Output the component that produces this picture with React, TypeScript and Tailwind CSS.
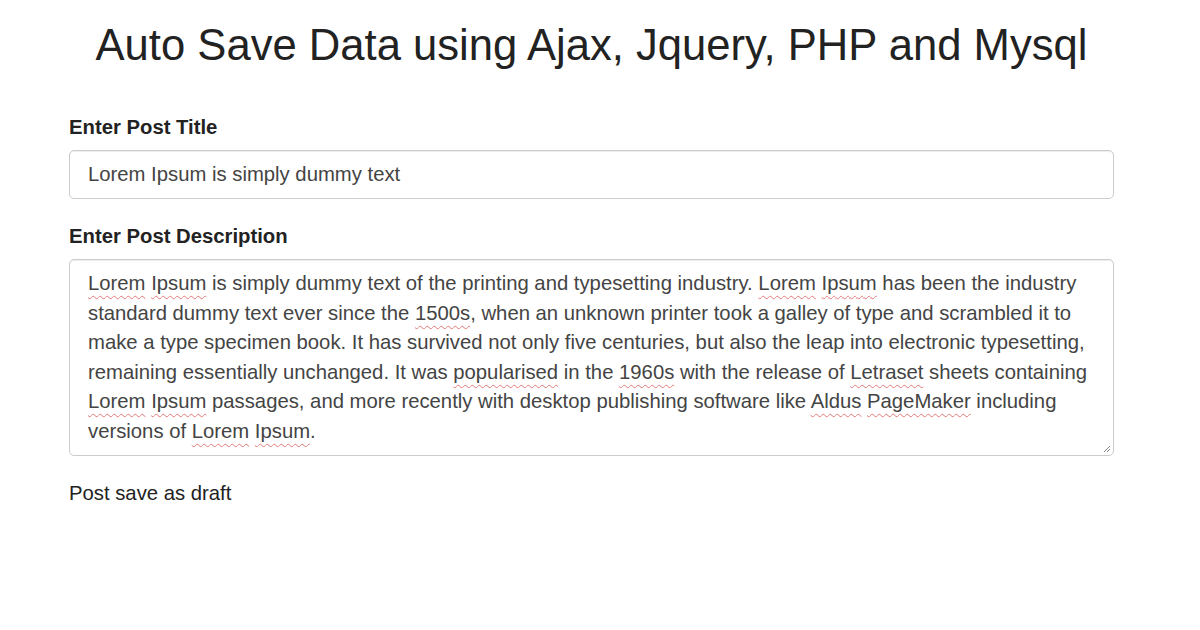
import React from 'react'

const Spell = ({ children }: { children: React.ReactNode }) => (
  <span className="underline decoration-wavy decoration-[#e57a7a] decoration-[1px] underline-offset-[5px]">
    {children}
  </span>
)

export default function App() {
  return (
    <div
      className="w-[1200px] h-[630px] bg-white text-[#333] overflow-hidden"
      style={{ fontFamily: '"Liberation Sans", Arial, sans-serif' }}
    >
      <div className="ml-[69px] w-[1045px]">
        <h1 className="pt-[20px] text-center text-[43.6px] leading-[50px] text-[#222]">
          Auto Save Data using Ajax, Jquery, PHP and Mysql
        </h1>

        <form className="mt-[43px]">
          <label className="block text-[20.3px] leading-[28px] font-bold text-[#222]">Enter Post Title</label>
          <div className="mt-[9px] h-[49px] rounded-[5px] border border-[#ccc] shadow-[inset_0_1px_1px_rgba(0,0,0,0.075)] px-[18px] flex items-center text-[20.3px] text-[#444]">
            Lorem Ipsum is simply dummy text
          </div>

          <label className="block mt-[23px] text-[20.3px] leading-[28px] font-bold text-[#222]">Enter Post Description</label>
          <div className="relative mt-[9px] h-[197px] rounded-[5px] border border-[#ccc] shadow-[inset_0_1px_1px_rgba(0,0,0,0.075)] px-[18px] pt-[9px] text-[20.3px] leading-[29.5px] text-[#444]">
            <div className="whitespace-nowrap"><Spell>Lorem</Spell> <Spell>Ipsum</Spell> is simply dummy text of the printing and typesetting industry. <Spell>Lorem</Spell> <Spell>Ipsum</Spell> has been the industry</div>
            <div className="whitespace-nowrap">standard dummy text ever since the <Spell>1500s</Spell>, when an unknown printer took a galley of type and scrambled it to</div>
            <div className="whitespace-nowrap">make a type specimen book. It has survived not only five centuries, but also the leap into electronic typesetting,</div>
            <div className="whitespace-nowrap">remaining essentially unchanged. It was <Spell>popularised</Spell> in the <Spell>1960s</Spell> with the release of <Spell>Letraset</Spell> sheets containing</div>
            <div className="whitespace-nowrap"><Spell>Lorem</Spell> <Spell>Ipsum</Spell> passages, and more recently with desktop publishing software like <Spell>Aldus</Spell> <Spell>PageMaker</Spell> including</div>
            <div className="whitespace-nowrap">versions of <Spell>Lorem</Spell> <Spell>Ipsum</Spell>.</div>
            <svg className="absolute right-[2px] bottom-[2px]" width="8" height="8" viewBox="0 0 8 8">
              <path d="M7 1 L1 7 M7 4 L4 7" stroke="#888" strokeWidth="1" />
            </svg>
          </div>
        </form>

        <p className="mt-[23px] text-[20.3px] leading-[28px] text-[#222]">Post save as draft</p>
      </div>
    </div>
  )
}
